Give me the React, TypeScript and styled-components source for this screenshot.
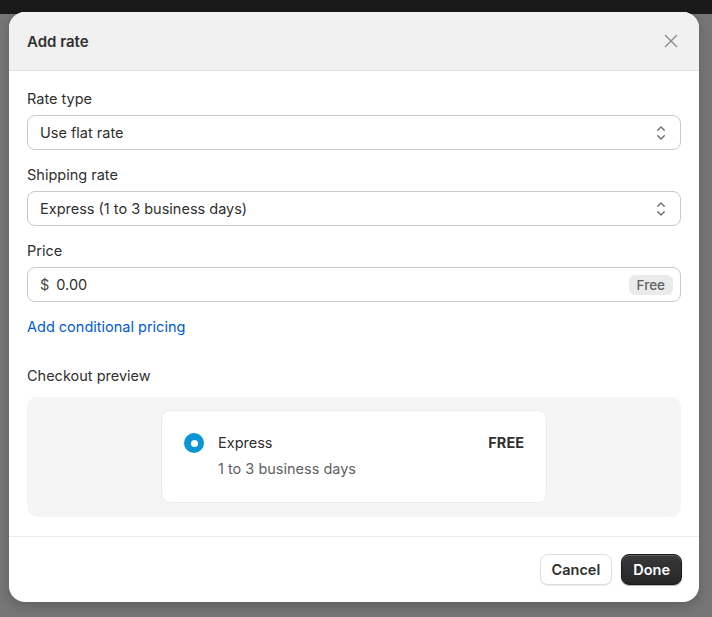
import React from 'react'
import styled, { createGlobalStyle } from 'styled-components'

const GlobalStyle = createGlobalStyle`
  html, body {
    margin: 0;
    padding: 0;
    height: 100%;
  }
  body {
    font-family: Inter, 'Noto Sans', sans-serif;
    background: #767676;
    -webkit-font-smoothing: antialiased;
  }
`

const Backdrop = styled.div`
  position: relative;
  width: 712px;
  height: 617px;
  background: #767676;
  overflow: hidden;
`

const TopBar = styled.div`
  height: 14px;
  background: #1a1a1a;
`

const Modal = styled.div`
  position: absolute;
  left: 9px;
  top: 12px;
  width: 690px;
  height: 590px;
  background: #fff;
  border-radius: 16px;
  overflow: hidden;
  display: flex;
  flex-direction: column;
  box-shadow: 0 4px 12px rgba(0, 0, 0, 0.2);
`

const Header = styled.div`
  height: 58px;
  flex: none;
  display: flex;
  align-items: center;
  justify-content: space-between;
  padding: 0 16px 0 18px;
  background: #f1f1f1;
  border-bottom: 1px solid #e3e3e3;
`

const Title = styled.h2`
  margin: 0;
  font-size: 15px;
  font-weight: 600;
  color: #303030;
`

const CloseButton = styled.button`
  border: none;
  background: none;
  padding: 0;
  width: 24px;
  height: 24px;
  display: flex;
  align-items: center;
  justify-content: center;
  color: #8a8a8a;
  cursor: pointer;
`

const Body = styled.div`
  flex: 1;
  padding: 18px 18px 18px;
  display: flex;
  flex-direction: column;
`

const Field = styled.div`
  display: flex;
  flex-direction: column;
  gap: 6px;
  margin-bottom: 15px;
`

const Label = styled.label`
  font-size: 14.5px;
  line-height: 20px;
  color: #303030;
`

const Control = styled.div`
  height: 35px;
  box-sizing: border-box;
  border: 1px solid #c9c9c9;
  border-radius: 8px;
  display: flex;
  align-items: center;
  padding: 0 7px 0 12px;
  font-size: 14.5px;
  color: #303030;
  background: #fff;
`

const ControlText = styled.span`
  flex: 1;
`

const Prefix = styled.span`
  color: #4a4a4a;
  margin-right: 7px;
`

const Badge = styled.span`
  background: #ebebeb;
  color: #616161;
  font-size: 13.5px;
  font-weight: 500;
  border-radius: 6px;
  padding: 2px 8px;
  line-height: 16px;
`

const Link = styled.a`
  font-size: 14.5px;
  line-height: 20px;
  color: #005bd3;
  text-decoration: none;
  margin-bottom: 29px;
`

const SectionLabel = styled.div`
  font-size: 14.5px;
  line-height: 20px;
  color: #303030;
  margin-bottom: 11px;
`

const Preview = styled.div`
  background: #f5f5f5;
  border-radius: 10px;
  padding: 13px 0 14px;
  display: flex;
  justify-content: center;
`

const RateCard = styled.div`
  width: 386px;
  box-sizing: border-box;
  background: #fff;
  border: 1px solid #ececec;
  border-radius: 9px;
  padding: 22px 22px 23px;
  display: grid;
  grid-template-columns: 20px 1fr auto;
  column-gap: 14px;
  row-gap: 6px;
  align-items: center;
`

const Radio = styled.span`
  width: 20px;
  height: 20px;
  border-radius: 50%;
  background: #0a95d4;
  display: flex;
  align-items: center;
  justify-content: center;

  &::after {
    content: '';
    width: 7px;
    height: 7px;
    border-radius: 50%;
    background: #fff;
  }
`

const RateName = styled.span`
  font-size: 14.5px;
  line-height: 20px;
  color: #303030;
`

const RatePrice = styled.span`
  font-size: 14.5px;
  line-height: 20px;
  font-weight: 700;
  color: #303030;
`

const RateSub = styled.span`
  grid-column: 2 / 4;
  font-size: 14.5px;
  line-height: 20px;
  color: #616161;
`

const Footer = styled.div`
  flex: none;
  height: 66px;
  box-sizing: border-box;
  border-top: 1px solid #ebebeb;
  display: flex;
  align-items: flex-start;
  justify-content: flex-end;
  gap: 9px;
  padding: 17px 17px 0;
`

const Button = styled.button<{ $primary?: boolean }>`
  height: 31px;
  padding: 0 11px;
  border-radius: 8px;
  font-family: inherit;
  font-size: 14.5px;
  font-weight: 600;
  cursor: pointer;
  border: 1px solid ${(p) => (p.$primary ? '#1a1a1a' : '#dcdcdc')};
  color: ${(p) => (p.$primary ? '#fff' : '#303030')};
  background: ${(p) =>
    p.$primary ? 'linear-gradient(#3a3a3a, #262626)' : '#fff'};
  box-shadow: ${(p) =>
    p.$primary
      ? 'inset 0 1px 0 rgba(255,255,255,0.2), 0 1px 1px rgba(0,0,0,0.3)'
      : '0 1px 0 rgba(0,0,0,0.08)'};
`

const Chevrons = () => (
  <svg width="24" height="24" viewBox="0 0 24 24" fill="none">
    <path d="M8.75 9.25l3.25-3.25 3.25 3.25" stroke="#6b6b6b" strokeWidth="1.4" strokeLinecap="round" strokeLinejoin="round" />
    <path d="M8.75 14.75l3.25 3.25 3.25-3.25" stroke="#6b6b6b" strokeWidth="1.4" strokeLinecap="round" strokeLinejoin="round" />
  </svg>
)

const CloseIcon = () => (
  <svg width="14" height="14" viewBox="0 0 14 14" fill="none">
    <path d="M1.5 1.5l11 11M12.5 1.5l-11 11" stroke="currentColor" strokeWidth="1.4" strokeLinecap="round" />
  </svg>
)

const App = () => {
  return (
    <>
      <GlobalStyle />
      <Backdrop>
        <TopBar />
        <Modal>
          <Header>
            <Title>Add rate</Title>
            <CloseButton aria-label="Close">
              <CloseIcon />
            </CloseButton>
          </Header>
          <Body>
            <Field>
              <Label>Rate type</Label>
              <Control>
                <ControlText>Use flat rate</ControlText>
                <Chevrons />
              </Control>
            </Field>
            <Field>
              <Label>Shipping rate</Label>
              <Control>
                <ControlText>Express (1 to 3 business days)</ControlText>
                <Chevrons />
              </Control>
            </Field>
            <Field>
              <Label>Price</Label>
              <Control>
                <Prefix>$</Prefix>
                <ControlText>0.00</ControlText>
                <Badge>Free</Badge>
              </Control>
            </Field>
            <Link href="#">Add conditional pricing</Link>
            <SectionLabel>Checkout preview</SectionLabel>
            <Preview>
              <RateCard>
                <Radio />
                <RateName>Express</RateName>
                <RatePrice>FREE</RatePrice>
                <RateSub>1 to 3 business days</RateSub>
              </RateCard>
            </Preview>
          </Body>
          <Footer>
            <Button>Cancel</Button>
            <Button $primary>Done</Button>
          </Footer>
        </Modal>
      </Backdrop>
    </>
  )
}

export default App
